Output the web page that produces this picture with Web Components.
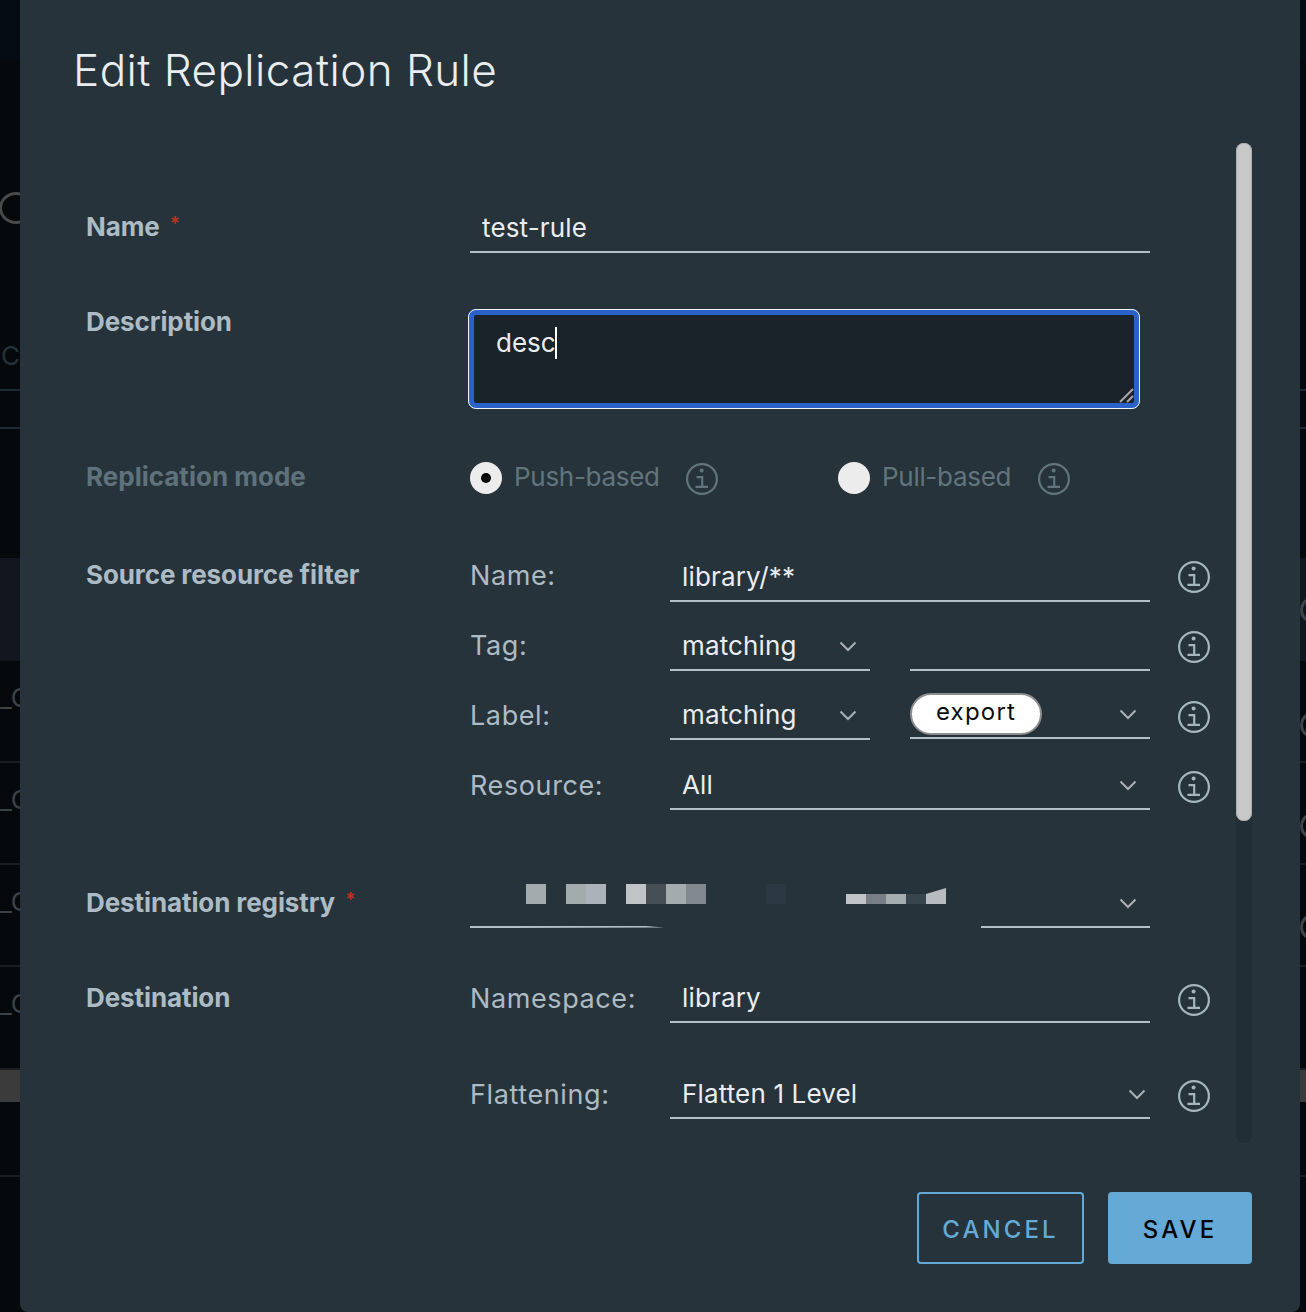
<!DOCTYPE html>
<html lang="en">
<head>
<meta charset="UTF-8">
<title>Edit Replication Rule</title>
<style>
  html, body { margin: 0; height: 1312px; overflow: hidden; background: #06090b; }
  body { position: relative; font-family: Inter, "Liberation Sans", sans-serif; }
</style>
</head>
<body>
  <page-backdrop></page-backdrop>

  <edit-rule-modal>
    <form-row label="Name" required style="--label-top:6px;--row-top:62px">
      <field-line wide>test-rule</field-line>
    </form-row>

    <form-row label="Description" style="--label-top:0px;--row-top:56px">
      <desc-box>desc</desc-box>
    </form-row>

    <form-row label="Replication mode" muted style="--label-top:4px;--row-top:51px">
      <mode-radio checked>Push-based</mode-radio>
      <mode-radio>Pull-based</mode-radio>
    </form-row>

    <form-row label="Source resource filter" stack style="--label-top:9px;--row-top:57px">
      <sub-row label="Name:"><field-line fill>library/**</field-line></sub-row>
      <sub-row label="Tag:" style="--sub-top:20px;--shift:1px"><field-line select>matching</field-line><field-line second></field-line></sub-row>
      <sub-row label="Label:" style="--sub-top:20px;--shift:2px"><field-line select>matching</field-line><field-line second chevron style="height:48px"><label-chip>export</label-chip></field-line></sub-row>
      <sub-row label="Resource:" style="--sub-top:21px;--shift:2px"><field-line fill chevron>All</field-line></sub-row>
    </form-row>

    <form-row label="Destination registry" required style="--label-top:7px;--row-top:70px">
      <registry-select></registry-select>
    </form-row>

    <form-row label="Destination" stack style="--label-top:11px;--row-top:46px">
      <sub-row label="Namespace:" style="--shift:2px"><field-line fill>library</field-line></sub-row>
      <sub-row label="Flattening:" style="--sub-top:47px;--shift:2px"><field-line fill chevron far>Flatten 1 Level</field-line></sub-row>
    </form-row>
  </edit-rule-modal>

  <template id="backdrop-template">
    <style>
      :host { display: flex; flex-direction: column; height: 1312px; overflow: hidden; color: #22333d; font-size: 26px; }
      .bar { height: 60px; background: #040b12; }
      .row { box-sizing: border-box; border-bottom: 2px solid #1c2a33; display: flex; align-items: center; justify-content: space-between; }
      .top { height: 261px; border: 0; align-items: flex-start; }
      .ring { width: 28px; height: 26px; margin: 132px 0 0 -1px; border: 3px solid #4a4a4a; border-radius: 50%; }
      .sel { height: 103px; background: #12171f; border-bottom: 0; }
      .cell { height: 102px; border-bottom-color: #1b1f23; color: #3d4347; }
      .cell span { margin-top: -28px; }
      /* letters of the table behind the dialog, only their left edge shows */
      .tail { width: 6px; height: 24px; overflow: hidden; flex: none; }
      .tail i { display: block; box-sizing: border-box; width: 20px; height: 24px; border: 3px solid #3d4347; border-radius: 50%; }
      .band { height: 32px; background: #3b3b3b; flex: none; }
    </style>
    <div class="bar"></div>
    <div class="row top"><div class="ring"></div></div>
    <div class="row" style="height:70px;padding-left:1px;letter-spacing:2px">CA</div>
    <div class="row" style="height:38px"></div>
    <div class="row" style="height:129px;border:0"></div>
    <div class="row sel"><b></b><div class="tail"><i></i></div></div>
    <div class="row cell"><span>_C</span><div class="tail" style="margin-top:28px"><i></i></div></div>
    <div class="row cell"><span>_C</span><div class="tail" style="margin-top:26px"><i></i></div></div>
    <div class="row cell"><span>_C</span><div class="tail" style="margin-top:24px"><i></i></div></div>
    <div class="row cell" style="height:103px"><span>_C</span></div>
    <div class="band"></div>
    <div class="row" style="height:75px;border-bottom-color:#1b1f23"></div>
  </template>

  <template id="modal-template">
    <style>
      :host { position: absolute; top: 0; left: 20px; width: 1280px; height: 1312px; background: #26333b; border-radius: 0 0 8px 8px; display: flex; flex-direction: column; color: #adbbc4; }
      header { height: 143px; flex: none; box-sizing: border-box; padding: 36px 0 0 53px; }
      h1 { margin: 0; font-size: 44px; line-height: 68px; font-weight: 300; color: #eaedf0; letter-spacing: .45px; }
      .body { height: 1000px; flex: none; display: flex; padding-left: 66px; }
      .form { width: 1150px; flex: none; display: flex; flex-direction: column; }
      .track { width: 16px; flex: none; height: 1000px; border-radius: 8px; background: #222e35; }
      .thumb { height: 678px; border-radius: 8px; background: #c8c8c8; box-shadow: inset 1px 0 1px #aaa, inset -1px 0 1px #aaa; }
      footer { display: flex; justify-content: flex-end; gap: 24px; padding: 49px 48px 0 0; }
      button { box-sizing: border-box; height: 72px; border-radius: 4px; font: 500 24px Inter, "Liberation Sans", sans-serif; letter-spacing: 3.1px; padding: 2px 0 0; }
      .cancel { width: 167px; background: none; border: 2px solid #65aad7; color: #65aad7; }
      .save { width: 144px; background: #65aad7; border: 0; color: #000; }
    </style>
    <header><h1>Edit Replication Rule</h1></header>
    <div class="body">
      <div class="form"><slot></slot></div>
      <div class="track"><div class="thumb"></div></div>
    </div>
    <footer>
      <button class="cancel">CANCEL</button>
      <button class="save">SAVE</button>
    </footer>
  </template>

  <template id="row-template">
    <style>
      :host { display: grid; grid-template-columns: 384px 1fr; margin-top: var(--row-top, 0); }
      .lbl { padding-top: var(--label-top, 0); font-size: 26px; line-height: 26px; font-weight: 700; letter-spacing: -.1px; color: #adbbc4; white-space: nowrap; }
      :host([muted]) .lbl { color: #5f727b; letter-spacing: 0; }
      .star { color: #c0321c; font-size: 19px; font-weight: 600; vertical-align: 6px; margin-left: 10px; }
      .ctl { display: flex; }
      :host([stack]) .ctl { flex-direction: column; }
    </style>
    <div class="lbl"><span class="text"></span><span class="star" hidden>*</span></div>
    <div class="ctl"><slot></slot></div>
  </template>

  <template id="sub-template">
    <style>
      :host { display: flex; align-items: flex-start; margin-top: var(--sub-top, 0); }
      .lbl { width: 200px; flex: none; padding-top: var(--shift, 0); font-size: 27px; letter-spacing: .6px; line-height: 46px; color: #adbbc4; }
      .fields { width: 480px; flex: none; display: flex; justify-content: space-between; align-items: flex-start; }
      info-icon { margin: calc(8px + var(--shift, 0px)) 0 0 28px; }
    </style>
    <div class="lbl"></div>
    <div class="fields"><slot></slot></div>
    <info-icon></info-icon>
  </template>

  <template id="field-template">
    <style>
      :host { box-sizing: border-box; display: flex; align-items: center; justify-content: space-between; height: 49px; border-bottom: 2px solid #b3bfc6; padding: 0 12px; font-size: 26px; letter-spacing: .15px; color: #eaedf0; white-space: nowrap; }
      :host([wide]) { width: 680px; height: 48px; padding-bottom: 2px; }
      :host([fill]) { width: 480px; }
      :host([select]) { width: 200px; }
      :host([second]) { width: 240px; padding-left: 0; }
      :host([far]) .chev { margin-right: -9px; }
      .chev { flex: none; margin-top: 0; }
      .txt { display: flex; align-items: center; }
    </style>
    <span class="txt"><slot></slot></span>
    <svg class="chev" width="20" height="12" viewBox="0 0 20 12"><path d="M2.5 2.5 10 10 17.5 2.5" fill="none" stroke="#aab0b3" stroke-width="2"/></svg>
  </template>

  <template id="desc-template">
    <style>
      :host { box-sizing: border-box; display: block; position: relative; margin-left: -2px; width: 672px; height: 100px; background: #1b232a; border: 6px solid #2a62c9; outline: 1.5px solid #f2f4f6; outline-offset: -1.5px; border-radius: 8px; padding: 8px 22px; font-size: 26px; line-height: 40px; color: #eaedf0; }
      .caret { display: inline-block; width: 2px; height: 32px; background: #fff; vertical-align: -7px; margin-left: -1px; }
      svg { position: absolute; right: 0; bottom: 0; }
    </style>
    <slot></slot><span class="caret"></span>
    <svg width="16" height="16" viewBox="0 0 16 16"><path d="M2 15 15 2M9 15 15 9" stroke="#a7a7a7" stroke-width="2" fill="none"/></svg>
  </template>

  <template id="radio-template">
    <style>
      :host { display: flex; align-items: center; height: 36px; width: 368px; font-size: 26px; letter-spacing: -.3px; color: #62757d; }
      .dot { width: 32px; height: 32px; border-radius: 50%; background: #ececec; display: flex; align-items: center; justify-content: center; margin-right: 12px; flex: none; }
      .dot i { width: 10px; height: 10px; border-radius: 50%; background: #000; display: none; }
      :host([checked]) .dot i { display: block; }
      .txt { padding-bottom: 4px; }
      info-icon { margin: 2px 0 0 26px; --ic: #62757d; }
      :host(:not([checked])) info-icon { margin-left: 27px; }
    </style>
    <span class="dot"><i></i></span><span class="txt"><slot></slot></span><info-icon></info-icon>
  </template>

  <template id="info-template">
    <style>
      :host { display: block; width: 32px; height: 32px; flex: none; }
      svg { display: block; }
    </style>
    <svg width="32" height="32" viewBox="0 0 32 32" fill="none" stroke="var(--ic, #a6b6be)" stroke-width="2.2">
      <circle cx="16" cy="16" r="14.9"/>
      <circle cx="15.6" cy="7.6" r="2" fill="var(--ic, #a6b6be)" stroke="none"/>
      <path d="M10.5 14.2H16.2V23.5M9.5 23.8H22"/>
    </svg>
  </template>

  <template id="chip-template">
    <style>
      :host { box-sizing: border-box; display: flex; align-items: center; justify-content: center; width: 132px; height: 42px; background: #fff; border: 2px solid #8e8e8e; border-radius: 21px; color: #0c0c0c; font-size: 24px; letter-spacing: 1.2px; padding-bottom: 5px; }
    </style>
    <slot></slot>
  </template>

  <template id="registry-template">
    <style>
      :host { display: block; width: 680px; height: 48px; }
      svg { display: block; }
    </style>
    <svg width="680" height="48" viewBox="0 0 680 48">
      <path d="M0 46H176L194 47.5 0 48Z" fill="#b3bfc6"/>
      <rect x="511" y="46" width="169" height="2" fill="#b3bfc6"/>
      <rect x="56" y="4" width="20" height="20" fill="#a3abad"/>
      <rect x="96" y="4" width="20" height="20" fill="#a3abad"/>
      <rect x="116" y="4" width="20" height="20" fill="#adb2ba"/>
      <rect x="156" y="4" width="20" height="20" fill="#c0c4c7"/>
      <rect x="176" y="4" width="20" height="20" fill="#464f55"/>
      <rect x="196" y="4" width="20" height="20" fill="#a3abad"/>
      <rect x="216" y="4" width="20" height="20" fill="#81888f"/>
      <rect x="296" y="4" width="20" height="20" fill="#2d3942"/>
      <rect x="376" y="14" width="20" height="10" fill="#c0c4c7"/>
      <rect x="396" y="14" width="20" height="10" fill="#777e86"/>
      <rect x="416" y="14" width="20" height="10" fill="#a5acad"/>
      <rect x="436" y="14" width="20" height="10" fill="#38454d"/>
      <path d="M456 14 476 8V24H456Z" fill="#b8bcc0"/>
      <path d="M650.500 19.500 658 27 665.500 19.500" fill="none" stroke="#aab0b3" stroke-width="2"/>
    </svg>
  </template>

  <script>
    // every element clones its template into an open shadow root
    function mount(el, id) {
      const root = el.attachShadow({ mode: 'open' })
      root.appendChild(document.querySelector(id).content.cloneNode(true))
      return root
    }

    class PageBackdrop extends HTMLElement {
      constructor() { super(); mount(this, '#backdrop-template') }
    }
    class EditRuleModal extends HTMLElement {
      constructor() { super(); mount(this, '#modal-template') }
    }
    class FormRow extends HTMLElement {
      constructor() {
        super()
        const root = mount(this, '#row-template')
        root.querySelector('.text').textContent = this.getAttribute('label')
        root.querySelector('.star').hidden = !this.hasAttribute('required')
      }
    }
    class SubRow extends HTMLElement {
      constructor() {
        super()
        mount(this, '#sub-template').querySelector('.lbl').textContent = this.getAttribute('label')
      }
    }
    class FieldLine extends HTMLElement {
      constructor() {
        super()
        const root = mount(this, '#field-template')
        // svg ignores the hidden attribute, so set display
        if (!(this.hasAttribute('select') || this.hasAttribute('chevron'))) {
          root.querySelector('.chev').style.display = 'none'
        }
      }
    }
    class DescBox extends HTMLElement {
      constructor() { super(); mount(this, '#desc-template') }
    }
    class ModeRadio extends HTMLElement {
      constructor() { super(); mount(this, '#radio-template') }
    }
    class InfoIcon extends HTMLElement {
      constructor() { super(); mount(this, '#info-template') }
    }
    class LabelChip extends HTMLElement {
      constructor() { super(); mount(this, '#chip-template') }
    }
    class RegistrySelect extends HTMLElement {
      constructor() { super(); mount(this, '#registry-template') }
    }

    customElements.define('page-backdrop', PageBackdrop)
    customElements.define('edit-rule-modal', EditRuleModal)
    customElements.define('form-row', FormRow)
    customElements.define('sub-row', SubRow)
    customElements.define('field-line', FieldLine)
    customElements.define('desc-box', DescBox)
    customElements.define('mode-radio', ModeRadio)
    customElements.define('info-icon', InfoIcon)
    customElements.define('label-chip', LabelChip)
    customElements.define('registry-select', RegistrySelect)
  </script>
</body>
</html>
